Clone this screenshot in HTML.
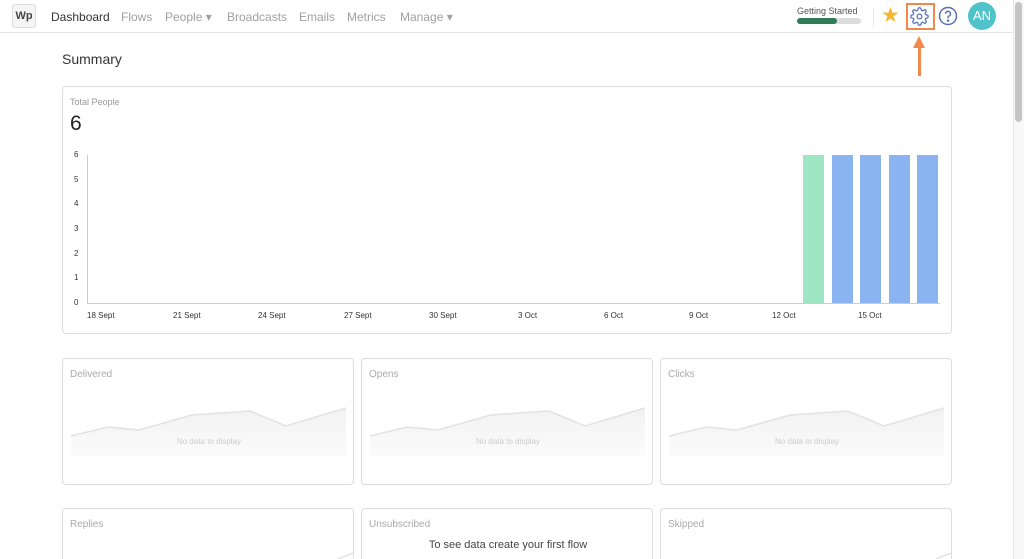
<!DOCTYPE html><html><head><style>
*{margin:0;padding:0;box-sizing:border-box}
html,body{width:1024px;height:559px;overflow:hidden}
body{background:#fff;font-family:"Liberation Sans",sans-serif;position:relative}
.a{position:absolute}
.nav{top:0;left:0;width:1013px;height:33px;border-bottom:1px solid #e6e6e6}
.nv{top:10px;font-size:12px;color:#a0a0a0}
.card{position:absolute;border:1px solid #dcdcdc;border-radius:4px;background:#fff}
.cb{border-bottom:none;border-radius:4px 4px 0 0;height:51px!important}
.ct{position:absolute;left:7px;top:10px;font-size:10px;color:#aaa}
.yl{position:absolute;left:74px;font-size:8px;color:#333}
.xl{position:absolute;top:311px;font-size:8px;color:#333}
.bar{position:absolute;top:155px;height:148px;width:21px;background:#8ab4f0}
</style></head><body>
<div class="a nav"></div>
<div class="a" style="left:12px;top:4px;width:24px;height:24px;border:1px solid #ddd;border-radius:3px;background:#f5f5f5;font-size:11px;font-weight:bold;color:#444;text-align:center;line-height:22px">Wp</div>
<div class="a nv" style="left:51px;color:#333">Dashboard</div>
<div class="a nv" style="left:121px">Flows</div>
<div class="a nv" style="left:165px">People ▾</div>
<div class="a nv" style="left:227px">Broadcasts</div>
<div class="a nv" style="left:299px">Emails</div>
<div class="a nv" style="left:347px">Metrics</div>
<div class="a nv" style="left:400px">Manage ▾</div>
<div class="a" style="left:797px;top:6px;font-size:9px;color:#555">Getting Started</div>
<div class="a" style="left:797px;top:18px;width:64px;height:6px;border-radius:3px;background:#ddd"><div style="width:40px;height:6px;border-radius:3px;background:#2e7d55"></div></div>
<div class="a" style="left:873px;top:7px;width:1px;height:20px;background:#e6e6e6"></div>
<div class="a" style="left:881px;top:3px;font-size:21px;color:#f5b731">★</div>
<div class="a" style="left:906px;top:3px;width:29px;height:27px;border:2px solid #f08a4b"></div>
<svg class="a" style="left:910px;top:7px" width="19" height="19" viewBox="0 0 24 24" fill="none" stroke="#5a6eb5" stroke-width="1.6"><circle cx="12" cy="12" r="3"/><path d="M19.4 15a1.7 1.7 0 0 0 .3 1.8l.1.1a2 2 0 1 1-2.8 2.8l-.1-.1a1.7 1.7 0 0 0-1.8-.3 1.7 1.7 0 0 0-1 1.5V21a2 2 0 1 1-4 0v-.1a1.7 1.7 0 0 0-1.1-1.5 1.7 1.7 0 0 0-1.8.3l-.1.1a2 2 0 1 1-2.8-2.8l.1-.1a1.7 1.7 0 0 0 .3-1.8 1.7 1.7 0 0 0-1.5-1H3a2 2 0 1 1 0-4h.1a1.7 1.7 0 0 0 1.5-1.1 1.7 1.7 0 0 0-.3-1.8l-.1-.1a2 2 0 1 1 2.8-2.8l.1.1a1.7 1.7 0 0 0 1.8.3H9a1.7 1.7 0 0 0 1-1.5V3a2 2 0 1 1 4 0v.1a1.7 1.7 0 0 0 1 1.5 1.7 1.7 0 0 0 1.8-.3l.1-.1a2 2 0 1 1 2.8 2.8l-.1.1a1.7 1.7 0 0 0-.3 1.8V9a1.7 1.7 0 0 0 1.5 1H21a2 2 0 1 1 0 4h-.1a1.7 1.7 0 0 0-1.5 1z"/></svg>
<svg class="a" style="left:938px;top:6px" width="20" height="20" viewBox="0 0 20 20" fill="none" stroke="#5a6eb5" stroke-width="1.5"><circle cx="10" cy="10" r="8.5"/><path d="M7.5 7.8a2.5 2.5 0 1 1 3.3 2.4c-.6.3-.8.8-.8 1.5v.6"/><circle cx="10" cy="14.6" r=".5" fill="#5a6eb5"/></svg>
<div class="a" style="left:968px;top:2px;width:28px;height:28px;border-radius:50%;background:#4fc3c9;color:#fff;font-size:13px;text-align:center;line-height:28px">AN</div>
<div class="a" style="left:918px;top:40px;width:3px;height:36px;background:#f08a4b"></div>
<div class="a" style="left:913px;top:36px;width:0;height:0;border-left:6.5px solid transparent;border-right:6.5px solid transparent;border-bottom:12px solid #f08a4b"></div>
<div class="a" style="left:1013px;top:0;width:11px;height:559px;background:#f8f8f8;border-left:1px solid #e8e8e8"></div>
<div class="a" style="left:1015px;top:2px;width:7px;height:120px;background:#c4c4c4;border-radius:4px"></div>
<div class="a" style="left:62px;top:51px;font-size:14px;color:#333">Summary</div>
<div class="card" style="left:62px;top:86px;width:890px;height:248px"></div>
<div class="a" style="left:70px;top:97px;font-size:9px;color:#999">Total People</div>
<div class="a" style="left:70px;top:112px;font-size:21px;color:#222">6</div>
<div class="a" style="left:87px;top:155px;width:1px;height:149px;background:#ccc"></div>
<div class="a" style="left:87px;top:303px;width:853px;height:1px;background:#ccc"></div>
<div class="yl" style="top:150px">6</div><div class="yl" style="top:175px">5</div><div class="yl" style="top:199px">4</div><div class="yl" style="top:224px">3</div><div class="yl" style="top:249px">2</div><div class="yl" style="top:273px">1</div><div class="yl" style="top:298px">0</div>
<div class="xl" style="left:87px">18 Sept</div><div class="xl" style="left:173px">21 Sept</div><div class="xl" style="left:258px">24 Sept</div><div class="xl" style="left:344px">27 Sept</div><div class="xl" style="left:429px">30 Sept</div><div class="xl" style="left:518px">3 Oct</div><div class="xl" style="left:604px">6 Oct</div><div class="xl" style="left:689px">9 Oct</div><div class="xl" style="left:772px">12 Oct</div><div class="xl" style="left:858px">15 Oct</div>
<div class="bar" style="left:803px;background:#9ee6c4"></div><div class="bar" style="left:832px"></div><div class="bar" style="left:860px"></div><div class="bar" style="left:889px"></div><div class="bar" style="left:917px"></div>
<svg width="0" height="0" style="position:absolute"><defs><linearGradient id="g" x1="0" y1="0" x2="0" y2="1"><stop offset="0" stop-color="#f2f2f2"/><stop offset="1" stop-color="#fbfbfb"/></linearGradient></defs></svg>
<div class="card" style="left:62px;top:358px;width:292px;height:127px"><div class="ct">Delivered</div><svg class="a" style="left:0;top:0" width="292" height="127"><path d="M8 77L45 68L76 71L129 56L187 52L223 67L283 49V97H8Z" fill="url(#g)"/><path d="M8 77L45 68L76 71L129 56L187 52L223 67L283 49" fill="none" stroke="#e2e2e2" stroke-width="1.5"/></svg><div class="a" style="left:0;width:292px;top:78px;text-align:center;font-size:8px;color:#ccc">No data to display</div></div>
<div class="card" style="left:361px;top:358px;width:292px;height:127px"><div class="ct">Opens</div><svg class="a" style="left:0;top:0" width="292" height="127"><path d="M8 77L45 68L76 71L129 56L187 52L223 67L283 49V97H8Z" fill="url(#g)"/><path d="M8 77L45 68L76 71L129 56L187 52L223 67L283 49" fill="none" stroke="#e2e2e2" stroke-width="1.5"/></svg><div class="a" style="left:0;width:292px;top:78px;text-align:center;font-size:8px;color:#ccc">No data to display</div></div>
<div class="card" style="left:660px;top:358px;width:292px;height:127px"><div class="ct">Clicks</div><svg class="a" style="left:0;top:0" width="292" height="127"><path d="M8 77L45 68L76 71L129 56L187 52L223 67L283 49V97H8Z" fill="url(#g)"/><path d="M8 77L45 68L76 71L129 56L187 52L223 67L283 49" fill="none" stroke="#e2e2e2" stroke-width="1.5"/></svg><div class="a" style="left:0;width:292px;top:78px;text-align:center;font-size:8px;color:#ccc">No data to display</div></div>
<div class="card cb" style="left:62px;top:508px;width:292px"><div class="ct">Replies</div><svg class="a" style="left:0;top:0" width="290" height="51"><path d="M275 50L290 44" stroke="#e2e2e2" stroke-width="1.5"/></svg></div>
<div class="card cb" style="left:361px;top:508px;width:292px"><div class="ct">Unsubscribed</div><div class="a" style="left:0;width:292px;top:30px;text-align:center;font-size:11px;color:#444">To see data create your first flow</div></div>
<div class="card cb" style="left:660px;top:508px;width:292px"><div class="ct">Skipped</div><svg class="a" style="left:0;top:0" width="290" height="51"><path d="M275 50L290 44" stroke="#e2e2e2" stroke-width="1.5"/></svg></div>
</body></html>
